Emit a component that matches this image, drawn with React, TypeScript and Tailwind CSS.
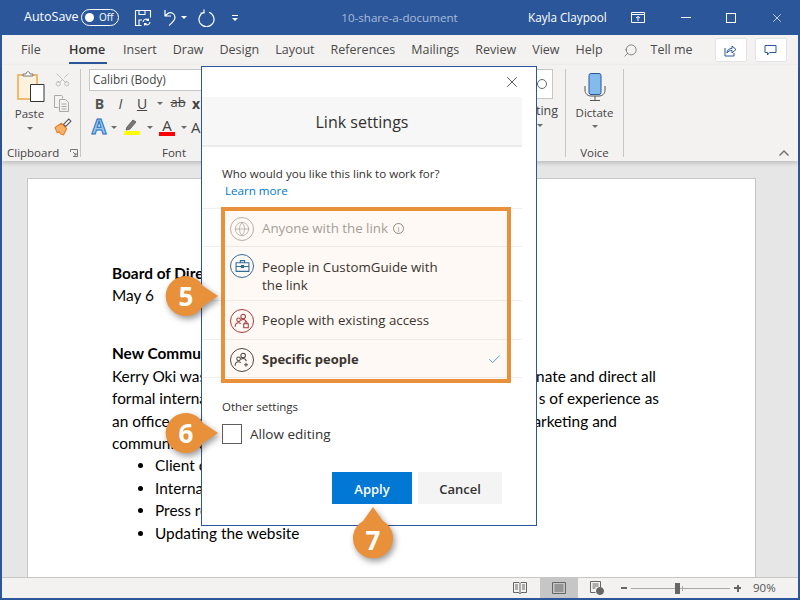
import { Check, Globe, Scissors, Search, X } from "lucide-react";

const tabs = ["Insert", "Draw", "Design", "Layout", "References", "Mailings", "Review", "View", "Help"];

function Caret({ className = "" }: { className?: string }) {
  return <span className={"block w-0 h-0 border-x-[3px] border-x-transparent border-t-[3px] border-t-[#6b6b6b] " + className} />;
}

function Callout({ n, className, up }: { n: string; className: string; up?: boolean }) {
  return (
    <div className={"absolute z-20 " + className}>
      <svg width={up ? 60 : 70} height={up ? 70 : 60} className="block drop-shadow-[2px_3px_3px_rgba(0,0,0,0.4)]">
        {up ? (
          <path d="M30 12 L40 26 A20 20 0 1 1 20 26 Z" fill="#e8913a" />
        ) : (
          <path d="M58 30 L43 40 A20 20 0 1 1 43 20 Z" fill="#e8913a" />
        )}
      </svg>
      <span
        className={
          "absolute w-[40px] h-[40px] flex items-center justify-center text-white font-bold text-[26px] font-['Open_Sans',sans-serif] " +
          (up ? "left-[10px] top-[25px]" : "left-[6px] top-[10px]")
        }
      >
        {n}
      </span>
    </div>
  );
}

function PeopleIcon({ badge }: { badge: "lock" | "plus" }) {
  return (
    <svg width="16" height="16" viewBox="0 0 14 14" fill="none" stroke="currentColor" strokeWidth="0.9">
      <circle cx="8" cy="3" r="2" />
      <circle cx="4" cy="6" r="1.6" />
      <path d="M1 12c0-2 1.2-3.5 3-3.5 .8 0 1.4 .3 1.9 .8M6 6.5c.6-.5 1.2-.8 2-.8 1.500 0 2.500 1 2.800 2.300" />
      {badge === "lock" ? (
        <path d="M8.500 9.500h4v3.500h-4zM9.500 9.500V8.500c0-1.200 2-1.200 2 0v1" />
      ) : (
        <path d="M10.500 9.500v3.500M8.800 11.200h3.500" />
      )}
    </svg>
  );
}

function Ring({ color, children }: { color: string; children: React.ReactNode }) {
  return (
    <span className={"w-[24px] h-[24px] rounded-full border-[1.5px] flex items-center justify-center shrink-0 " + color}>
      {children}
    </span>
  );
}

export default function App() {
  return (
    <div className="relative w-[800px] h-[600px] overflow-hidden font-['Open_Sans',sans-serif] text-[#444]">
      <div className="flex flex-col h-full border-x-2 border-b-2 border-[#2b579a]">
        {/* title bar */}
        <div className="h-[35px] shrink-0 -mx-[2px] bg-[#2b579a] flex items-center text-white text-[12.5px]">
          <span className="ml-[24px] w-[57px]">AutoSave</span>
          <span className="w-[38px] h-[17px] rounded-full border border-white flex items-center pl-[3px] gap-[5px] text-[10px]">
            <span className="w-[9px] h-[9px] rounded-full bg-white" />
            Off
          </span>
          <svg width="18" height="18" viewBox="0 0 18 18" fill="none" stroke="white" strokeWidth="1.1" className="ml-[15px]">
            <path d="M1.500 1.500h15v7M1.500 1.500v15h6M5 1.500v4h6v-4M5 16V11h3" />
            <path d="M9 13a3 3 0 0 1 5.500-1.500M16 13a3 3 0 0 1-5.500 1.500M14.500 9.500v2h-2M10.500 16.500v-2h2" />
          </svg>
          <svg width="18" height="18" viewBox="0 0 18 18" fill="none" stroke="white" strokeWidth="1.2" className="ml-[8px]">
            <path d="M5 1v6h6M5 7l3.500-3c3-1.500 6.500 1 6.500 4.500 0 3-2.500 5-6 8" />
          </svg>
          <Caret className="ml-[3px] !border-t-white" />
          <svg width="18" height="18" viewBox="0 0 18 18" fill="none" stroke="white" strokeWidth="1.2" className="ml-[11px]">
            <path d="M6 3.200a7.500 7.500 0 1 0 5 0M6 .5V4H2.500" />
          </svg>
          <span className="ml-[16px] flex flex-col items-center gap-[2px]">
            <span className="w-[6px] h-px bg-white" />
            <Caret className="!border-t-white" />
          </span>
          <span className="ml-[99px] w-[125px] text-center text-[#a9bcd8] text-[11.600px] whitespace-nowrap">10-share-a-document</span>
          <span className="ml-[66px] w-[78px] whitespace-nowrap text-[11.700px]">Kayla Claypool</span>
          <svg width="14" height="11" viewBox="0 0 14 11" fill="none" stroke="white" className="ml-[25px]">
            <path d="M.5.500h13v10H.5zM.5 2.500h13M7 9V4.500M5 6l2-1.500L9 6" />
          </svg>
          <span className="ml-[36px] w-[10px] h-px bg-white" />
          <span className="ml-[35px] w-[10px] h-[10px] border border-white" />
          <X size={14} strokeWidth={1.2} className="ml-[34px]" />
        </div>

        {/* tabs */}
        <div className="h-[30px] shrink-0 bg-[#f3f2f1] flex items-center text-[12.5px] text-[#4a4a4a] pl-[19px]">
          <span className="w-[48px]">File</span>
          <span className="relative font-semibold text-[#333] w-[54px]">
            Home
            <span className="absolute left-0 top-[21px] w-[38px] h-[2px] bg-[#2b579a]" />
          </span>
          <div className="flex gap-[16px]">
            {tabs.map((t) => (
              <span key={t}>{t}</span>
            ))}
          </div>
          <Search size={15} strokeWidth={1.1} className="ml-[20px] -scale-x-100 text-[#555]" />
          <span className="ml-[13px] w-[46px] whitespace-nowrap">Tell me</span>
          <span className="ml-[18px] w-[32px] h-[24px] bg-white border border-[#e3e3e3] rounded-[2px] flex items-center justify-center">
            <svg width="13" height="13" viewBox="0 0 13 13" fill="none" stroke="#2b579a">
              <path d="M1 4v8h9V9M3 9c0-3 2-4.500 5-4.500V2l4 3.500L8 9V6.500C6 6.500 4 7 3 9z" />
            </svg>
          </span>
          <span className="ml-[8px] w-[32px] h-[24px] bg-white border border-[#e3e3e3] rounded-[2px] flex items-center justify-center">
            <svg width="13" height="13" viewBox="0 0 13 13" fill="none" stroke="#2b579a">
              <path d="M1 1.500h11v7H5.500L3.500 11V8.500H1z" />
            </svg>
          </span>
        </div>

        {/* ribbon */}
        <div className="relative z-10 h-[96px] shrink-0 bg-[#f3f2f1] flex items-center shadow-[0_2px_4px_rgba(0,0,0,0.18)] text-[11.500px]">
          <div className="w-[78px] h-full flex flex-col">
            <div className="flex-1 flex">
              <div className="w-[52px] pl-[3px] flex flex-col items-center pt-[6px]">
                <svg width="28" height="31" viewBox="0 0 28 31" className="ml-[2px]">
                  <path d="M1 4h19v24H1z" fill="#fdf2dd" stroke="#f0a64a" strokeWidth="1.5" />
                  <path d="M6 5V3h3c0-3 4-3 4 0h3v2z" fill="#fff" stroke="#777" />
                  <path d="M13.500 13.500h13.500v17H13.500z" fill="#fff" stroke="#333" />
                </svg>
                <span className="mt-[3px] leading-[17px]">Paste</span>
                <Caret className="mt-[5px]" />
              </div>
              <div className="flex flex-col items-start pt-[6px]">
                <Scissors size={17} strokeWidth={1} className="text-[#aaa] -rotate-90" />
                <svg width="16" height="17" viewBox="0 0 16 17" fill="none" stroke="#a8a8a8" className="mt-[7px]">
                  <path d="M.5.500h7l1 1v2M.5.500v12h4M5.500 4.500h6l3 3v9h-9zM7.500 9h5M7.500 11.500h5M7.500 14h5" />
                </svg>
                <svg width="18" height="18" viewBox="0 0 17 17" className="mt-[6px]">
                  <path d="M1 9l6-4 5 5-3 6-3-1-1-2-2 1z" fill="#f6b26b" stroke="#e57f25" />
                  <path d="M9 6l5-5 2 2-5 5z" fill="#fff" stroke="#555" />
                </svg>
              </div>
            </div>
            <div className="h-[17px] flex items-center pl-[5px] whitespace-nowrap">
              Clipboard
              <svg width="8" height="8" viewBox="0 0 8 8" fill="none" stroke="#777" className="ml-[11px]">
                <path d="M.5 3V.5h7v7H3M3 3l3 3M6 4v2H4" />
              </svg>
            </div>
          </div>
          <span className="w-px h-[88px] bg-[#c6c6c6]" />

          <div className="w-[484px] h-full flex flex-col overflow-hidden">
            <div className="flex-1 flex justify-between pt-[4px]">
              <div className="pl-[8px] w-[130px]">
                <div className="w-[140px] h-[22px] bg-white border border-[#c6c6c6] flex items-center pl-[3px] text-[11.800px]">
                  Calibri (Body)
                </div>
                <div className="flex items-center h-[24px] text-[14px] whitespace-nowrap">
                  <span className="w-[21px] text-center font-bold text-[#555]">B</span>
                  <span className="w-[21px] text-center italic">I</span>
                  <span className="w-[22px] text-center underline">U</span>
                  <span className="w-[13px] flex justify-center">
                    <Caret />
                  </span>
                  <span className="w-[24px] text-center line-through text-[13px]">ab</span>
                  <span className="w-[12px] text-center font-bold">x</span>
                </div>
                <div className="flex items-center h-[24px] whitespace-nowrap">
                  <span className="w-[20px] text-center text-[21px] font-bold text-[#9cc8f0] [-webkit-text-stroke:1px_#1f6fc0]">A</span>
                  <span className="w-[10px] flex justify-center">
                    <Caret />
                  </span>
                  <span className="w-[26px] flex flex-col items-center">
                    <svg width="14" height="12" viewBox="0 0 14 12" fill="none" stroke="#666">
                      <path d="M1 11l1-3 6-7 3 2-6 7z" fill="#777" />
                    </svg>
                    <span className="w-[16px] h-[4px] bg-[#ffff00]" />
                  </span>
                  <span className="w-[10px] flex justify-center">
                    <Caret />
                  </span>
                  <span className="w-[24px] flex flex-col items-center">
                    <span className="text-[15px] leading-[14px]">A</span>
                    <span className="w-[16px] h-[4px] bg-[#ff0000]" />
                  </span>
                  <span className="w-[10px] flex justify-center">
                    <Caret />
                  </span>
                  <span className="text-[15px] pl-[2px]">A</span>
                </div>
              </div>
              <div className="w-[29px] flex flex-col items-start">
                <div className="w-[17px] h-[30px] border-y border-r border-[#c6c6c6] bg-white flex items-center">
                  <span className="w-[10px] h-[10px] rounded-full border border-[#666] ml-[1px]" />
                </div>
                <span className="mt-[3px] leading-[17px] text-[12.5px]">ting</span>
                <Caret className="ml-[1px] mt-[5px]" />
              </div>
            </div>
            <div className="h-[17px] flex items-center pl-[81px]">Font</div>
          </div>
          <span className="w-px h-[88px] bg-[#c6c6c6]" />

          <div className="w-[57px] h-full flex flex-col items-center">
            <svg width="22" height="28" viewBox="0 0 22 28" className="mt-[8px]" fill="none">
              <rect x="5" y=".5" width="12" height="21" rx="2" fill="#83bcec" stroke="#2b579a" />
              <path d="M1 13v4c0 4 3 6 6 6h8c3 0 6-2 6-6v-4M11 23v4M6 27.500h10" stroke="#555" />
            </svg>
            <span className="mt-[3px] leading-[17px]">Dictate</span>
            <Caret className="mt-[4px]" />
            <span className="mt-auto h-[17px] flex items-center">Voice</span>
          </div>
          <span className="w-px h-[88px] bg-[#c6c6c6]" />
          <div className="flex-1 h-full flex items-end justify-end pr-[9px] pb-[5px]">
            <svg width="10" height="6" viewBox="0 0 10 6" fill="none" stroke="#777" strokeWidth="1.500">
              <path d="M.5 5.500L5 1l4.500 4.500" />
            </svg>
          </div>
        </div>

        {/* document */}
        <div className="flex-1 min-h-0 bg-[#e6e6e6] pt-[17px] pl-[25px] pr-[42px] overflow-hidden">
          <div className="h-full bg-white border border-b-0 border-[#c6c6c6] pt-[83px] pl-[84px] font-['Lato',sans-serif] text-[15.400px] leading-[22.400px] text-black whitespace-nowrap">
            <p className="font-bold">Board of Directors</p>
            <p className="mb-[35.500px]">May 6</p>
            <p className="font-bold">New Communications</p>
            <p className="flex justify-between w-[544px]">
              <span>Kerry Oki was</span>
              <span>nate and direct all</span>
            </p>
            <p className="flex justify-between w-[547px]">
              <span className="w-[120px] overflow-hidden">formal internal</span>
              <span>s of experience as</span>
            </p>
            <p className="flex justify-between w-[505px]">
              <span className="w-[120px] overflow-hidden">an office manager</span>
              <span>arketing and</span>
            </p>
            <p>communications</p>
            <ul className="list-disc pl-[43px]">
              <li>Client communication</li>
              <li>Internal newsletter</li>
              <li>Press releases</li>
              <li>Updating the website</li>
            </ul>
          </div>
        </div>

        {/* status bar */}
        <div className="h-[21px] shrink-0 bg-[#f3f2f1] border-t border-[#c6c6c6] flex items-center text-[#555] text-[11.500px]">
          <svg width="14" height="13" viewBox="0 0 14 13" fill="none" stroke="#666" className="ml-[511px]">
            <path d="M.5.500h5.500l1 1 1-1h5.500v10h-5.500l-1 1.500-1-1.500H.5zM7 1.500v9M2 3h3M2 5h3M2 7h3M9 3h3M9 5h3M9 7h3" />
          </svg>
          <span className="ml-[13px] w-[38px] h-full bg-[#c6c6c6] flex items-center justify-center">
            <svg width="14" height="12" viewBox="0 0 14 12" fill="none" stroke="#666">
              <path d="M.5.500h13v11H.5zM2.500 3h9M2.500 5h9M2.500 7h9M2.500 9h9" />
            </svg>
          </span>
          <svg width="14" height="14" viewBox="0 0 14 14" fill="none" stroke="#666" className="ml-[12px]">
            <path d="M.5.500h10v6M.5.500v11h5M2.500 3h6M2.500 5h6M2.500 7h3" />
            <circle cx="10" cy="10" r="3.500" fill="#666" />
          </svg>
          <span className="ml-[17px] w-[6px] h-[2px] bg-[#666]" />
          <span className="relative ml-[4px] w-[99px] h-px bg-[#a8a8a8]">
            <span className="absolute left-[44px] -top-[5px] w-[5px] h-[11px] bg-[#666]" />
            <span className="absolute left-[51px] -top-[2px] w-px h-[5px] bg-[#a8a8a8]" />
          </span>
          <span className="relative ml-[4px] w-[7px] h-[2px] bg-[#666]">
            <span className="absolute left-[2.500px] -top-[2.500px] w-[2px] h-[7px] bg-[#666]" />
          </span>
          <span className="ml-[12px]">90%</span>
        </div>
      </div>

      {/* link settings dialog */}
      <div className="absolute z-20 left-[201px] top-[66px] w-[336px] h-[460px] bg-white border border-[#2b579a] text-[#323130]">
        <div className="h-[30px] flex items-center justify-end pr-[15px]">
          <X size={18} strokeWidth={1.1} className="text-[#333]" />
        </div>
        <div className="w-[320px] h-[50px] pt-[2px] bg-[#f7f7f7] border-b-2 border-[#ebebeb] flex items-center justify-center text-[16px]">
          Link settings
        </div>
        <div className="w-[320px] pt-[19px] pl-[20px] text-[11.600px] leading-[16.500px] h-[61px]">
          <p>Who would you like this link to work for?</p>
          <p className="pl-[3px] text-[#0078d4]">Learn more</p>
        </div>
        <div className="w-[320px] border-t border-[#efefef] text-[13.300px]">
          <div className="h-[38px] pt-[2px] border-b border-[#efefef] flex items-center pl-[28px] gap-[8px] text-[#a19f9d]">
            <Ring color="border-[#b5b3b1] text-[#a19f9d]">
              <Globe size={16} strokeWidth={1} />
            </Ring>
            <span>Anyone with the link</span>
            <span className="w-[11px] h-[11px] -ml-[3px] rounded-full border border-[#8a8886] text-[8px] leading-[9px] text-center text-[#8a8886]">i</span>
          </div>
          <div className="h-[54px] pt-[7px] border-b border-[#efefef] flex items-start pl-[28px] gap-[8px] leading-[18px]">
            <Ring color="border-[#2b6a9e] text-[#2b6a9e]">
              <svg width="15" height="14" viewBox="0 0 14 13" fill="none" stroke="currentColor">
                <path d="M1 3.500h12v8H1zM5 3.500V1.500h4v2M1 7h12" />
                <rect x="6" y="6" width="2" height="2" fill="currentColor" />
              </svg>
            </Ring>
            <span className="mt-[4px]">
              People in CustomGuide with
              <br />
              the link
            </span>
          </div>
          <div className="h-[39px] pt-[2px] border-b border-[#efefef] flex items-center pl-[28px] gap-[8px]">
            <Ring color="border-[#a4373a] text-[#a4373a]">
              <PeopleIcon badge="lock" />
            </Ring>
            <span>People with existing access</span>
          </div>
          <div className="h-[38px] pt-[2px] border-b border-[#efefef] flex items-center pl-[28px] gap-[8px] font-bold text-[13px]">
            <Ring color="border-[#484644] text-[#484644]">
              <PeopleIcon badge="plus" />
            </Ring>
            <span>Specific people</span>
            <Check size={15} strokeWidth={1.3} className="ml-auto mr-[20px] !text-[#2b88d8]" />
          </div>
        </div>
        <div className="w-[320px] px-[20px] pt-[21px]">
          <p className="text-[11.500px] leading-[16px]">Other settings</p>
          <label className="mt-[9px] flex items-center gap-[8px] text-[13.500px]">
            <span className="w-[20px] h-[20px] border border-[#605e5c]" />
            Allow editing
          </label>
          <div className="mt-[28px] flex justify-end gap-[6px] text-[13px] font-semibold">
            <span className="w-[80px] h-[32px] pt-[2px] bg-[#0078d4] text-white flex items-center justify-center">Apply</span>
            <span className="w-[84px] h-[32px] pt-[2px] bg-[#f4f4f4] flex items-center justify-center">Cancel</span>
          </div>
        </div>
      </div>

      {/* orange highlight over the options */}
      <div className="absolute z-20 left-[221px] top-[207px] w-[290px] h-[176px] border-[4px] border-[#e8913a] bg-[#e8913a]/5" />

      <Callout n="5" className="left-[160px] top-[266px]" />
      <Callout n="6" className="left-[160px] top-[403px]" />
      <Callout n="7" up className="left-[343px] top-[495px]" />
    </div>
  );
}
